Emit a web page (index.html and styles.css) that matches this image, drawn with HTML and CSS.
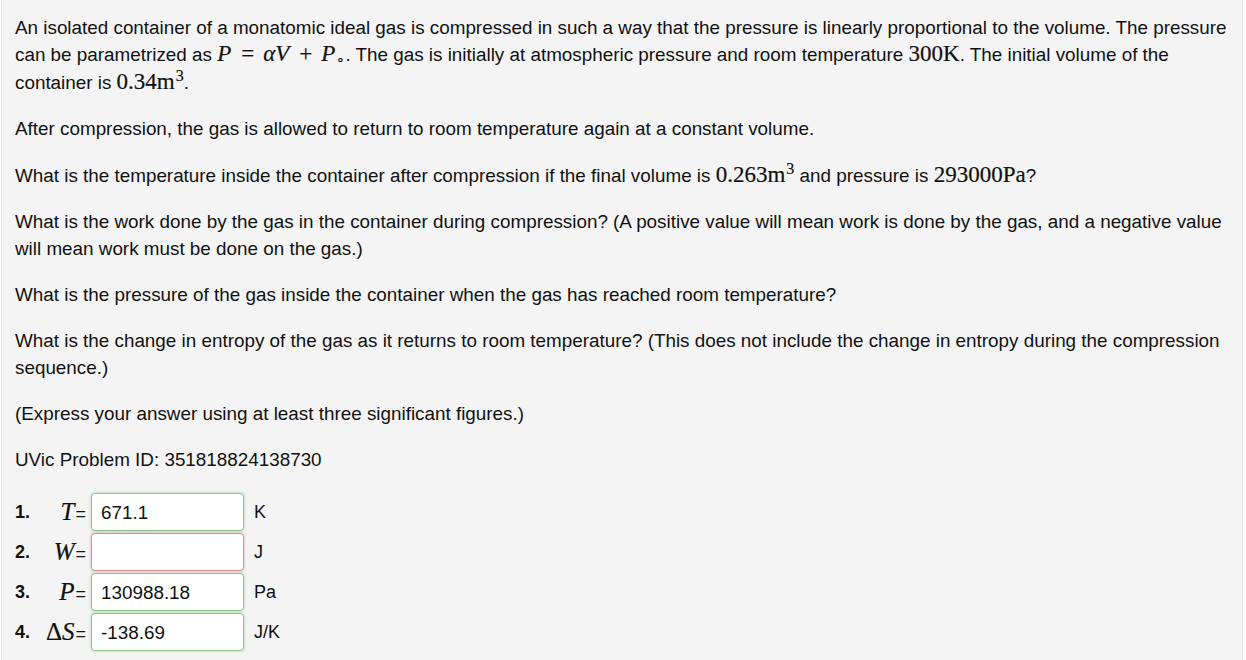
FILE: index.html
```html
<!DOCTYPE html>
<html>
<head>
<meta charset="utf-8">
<link rel="stylesheet" href="styles.css">
</head>
<body>
<div class="problem">
  <p>An isolated container of a monatomic ideal gas is compressed in such a way that the pressure is linearly proportional to the volume. The pressure can be parametrized as <span class="m"><i>P</i><span class="op">=</span><i>αV</i><span class="op">+</span><i>P</i><sub class="circ">∘</sub></span>. The gas is initially at atmospheric pressure and room temperature <span class="m">300K</span>. The initial volume of the container is <span class="m">0.34m<sup>3</sup></span>.</p>
  <p>After compression, the gas is allowed to return to room temperature again at a constant volume.</p>
  <p>What is the temperature inside the container after compression if the final volume is <span class="m">0.263m<sup>3</sup></span> and pressure is <span class="m">293000Pa</span>?</p>
  <p>What is the work done by the gas in the container during compression? (A positive value will mean work is done by the gas, and a negative value will mean work must be done on the gas.)</p>
  <p>What is the pressure of the gas inside the container when the gas has reached room temperature?</p>
  <p>What is the change in entropy of the gas as it returns to room temperature? (This does not include the change in entropy during the compression sequence.)</p>
  <p>(Express your answer using at least three significant figures.)</p>
  <p>UVic Problem ID: 351818824138730</p>
  <div class="answers">
    <span class="num">1.</span><span class="lbl"><i class="mv">T</i>=</span><div class="box ok">671.1</div><span class="unit">K</span>
    <span class="num">2.</span><span class="lbl"><i class="mv">W</i>=</span><div class="box bad"></div><span class="unit">J</span>
    <span class="num">3.</span><span class="lbl"><i class="mv">P</i>=</span><div class="box ok">130988.18</div><span class="unit">Pa</span>
    <span class="num">4.</span><span class="lbl"><span class="mu">Δ</span><i class="mv">S</i>=</span><div class="box ok">-138.69</div><span class="unit">J/K</span>
  </div>
</div>
</body>
</html>
```
FILE: styles.css
```css
html, body {
  margin: 0;
  padding: 0;
  background: #ffffff;
}
.problem {
  width: 1242px;
  min-height: 660px;
  box-sizing: border-box;
  margin-left: 1px;
  background: #f4f4f4;
  border-left: 1px solid #e0e0e0;
  border-right: 1px solid #e0e0e0;
  padding: 14px 0 0 13px;
  font-family: "Liberation Sans", Arial, sans-serif;
  font-size: 18.85px;
  color: #111;
}
.problem p {
  margin: 0 0 19px 0;
  line-height: 27px;
  width: 1222px;
}
.m {
  font-family: "Liberation Serif", "Times New Roman", serif;
  font-size: 23px;
  line-height: 1;
  white-space: nowrap;
  -webkit-text-stroke: 0.2px #111;
}
.m i { font-style: italic; }
.m .op { margin: 0 9px 0 10px; }
.m sup {
  display: inline-block;
  font-size: 16px;
  line-height: 1;
  vertical-align: 8px;
  margin-left: 1px;
}
.m sub.circ {
  font-size: 14px;
  vertical-align: 0;
  position: relative;
  top: 3px;
  line-height: 0;
  margin-left: 1px;
}
.answers {
  display: grid;
  grid-template-columns: 28px 48px 153px auto;
  grid-auto-rows: 40px;
  align-items: center;
  margin-top: 17px;
}
.num {
  font-weight: bold;
  font-size: 18px;
}
.lbl {
  text-align: right;
  font-size: 18px;
  white-space: nowrap;
  padding-right: 5px;
}
.mv {
  font-family: "Liberation Serif", "Times New Roman", serif;
  font-size: 25px;
  font-style: italic;
  margin-right: 1px;
  -webkit-text-stroke: 0.2px #111;
}
.mu {
  font-family: "Liberation Serif", "Times New Roman", serif;
  font-size: 25px;
  -webkit-text-stroke: 0.2px #111;
}
.box {
  height: 38px;
  box-sizing: border-box;
  background: #fff;
  border-radius: 4px;
  padding: 8px 9px;
  font-size: 18.85px;
  line-height: 22px;
}
.box.ok {
  border: 1px solid #8cc58c;
  box-shadow: 0 0 3px rgba(90, 170, 90, 0.45);
}
.box.bad {
  border: 1px solid #d89090;
  box-shadow: 0 0 3px rgba(200, 90, 90, 0.45);
}
.unit {
  padding-left: 10px;
  font-size: 18px;
}
```
